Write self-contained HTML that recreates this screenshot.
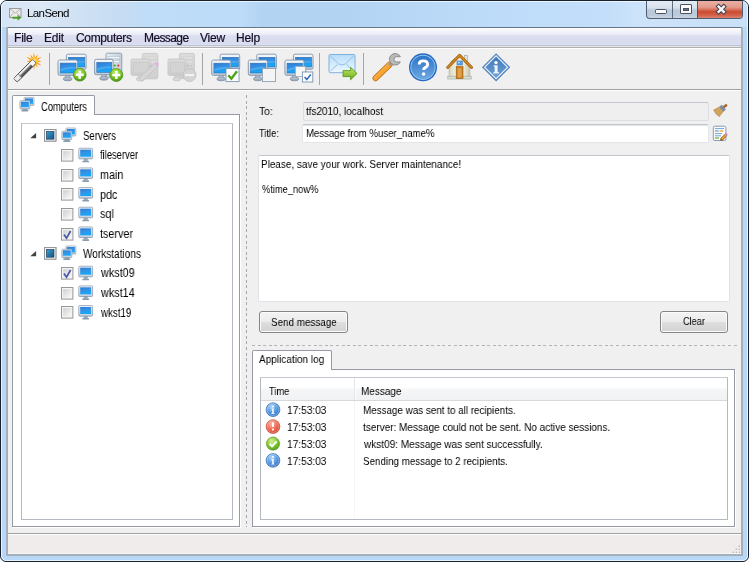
<!DOCTYPE html>
<html><head><meta charset="utf-8">
<style>
*{box-sizing:border-box;margin:0;padding:0}
html,body{width:749px;height:562px;overflow:hidden;background:#fff}
body{position:relative;font-family:"Liberation Sans",sans-serif;font-size:11px;color:#000}
.a{position:absolute}
.t{position:absolute;white-space:nowrap;transform-origin:0 0;line-height:1;will-change:transform}
.sep{position:absolute;width:1px;top:52.5px;height:32px;background:#a6a6a6}
.tab{position:absolute;background:#fff;border:1px solid #959aa4;border-bottom:none;border-radius:2px 2px 0 0}
.page{position:absolute;background:#fff;border:1px solid #959aa4;box-shadow:1px 1px 0 #fff}
.btn{position:absolute;border:1px solid #858585;border-radius:3px;background:linear-gradient(#f3f3f3 0,#ececec 48%,#dedede 52%,#d2d2d2 100%);box-shadow:inset 0 0 0 1px #fbfbfb}
.dash{position:absolute;background:repeating-linear-gradient(90deg,#b4b4b4 0 3px,transparent 3px 5.6px)}
.dashv{position:absolute;background:repeating-linear-gradient(180deg,#a8a8a8 0 3px,transparent 3px 5.6px)}
</style></head><body>
<!-- window frame -->
<div class="a" style="left:0;top:0;width:749px;height:562px;border:1px solid #18212c;border-radius:7px 7px 6px 6px;background:#b9d8f8;overflow:hidden">
 <div class="a" style="left:0;top:0;width:747px;height:26px;background:linear-gradient(90deg,#d6e5f5 0px,#dbe8f6 40px,#cfe1f4 80px,#c6dcf2 120px,#bfdcf8 150px,#bcdcf9 240px,#b3d3f3 262px,#b3d3f3 340px,#bcdbf9 470px,#c3defa 600px,#cce3fa 640px,#c8e0f8 747px)"></div>
 <div class="a" style="left:0;top:0;width:747px;height:560px;border:1px solid rgba(240,250,255,0.85);border-radius:6px 6px 5px 5px"></div>
</div>
<!-- inner border + client -->
<div class="a" style="left:6px;top:27px;width:737px;height:529px;border:2px solid #a3afbb;border-top:1px solid #687584;border-radius:2px 2px 0 0;background:#f0f0f0"></div>
<!-- title -->
<div class="a" style="left:27px;top:7px;font-size:11.5px;color:#000;letter-spacing:-0.6px;will-change:transform">LanSend</div>
<!-- caption buttons -->
<div class="a" style="left:646px;top:1px;width:97px;height:18px;border:1px solid #505e70;border-top:none;border-radius:0 0 4px 4px;overflow:hidden;background:linear-gradient(#e4ecf5 0,#d6e1ed 40%,#b9c9da 55%,#bccbdb 85%,#cad6e3 100%)">
 <div class="a" style="left:25px;top:0;width:1px;height:18px;background:#5e6c7c"></div>
 <div class="a" style="left:51px;top:0;width:45px;height:18px;background:linear-gradient(#eab0a4 0,#e29a8a 35%,#cc4a30 60%,#d4634c 80%,#e0907e 100%)"></div>
 <div class="a" style="left:50px;top:0;width:1px;height:18px;background:#6a4c48"></div>
 <div class="a" style="left:7.5px;top:7.5px;width:12px;height:5px;background:#fafafa;border:1px solid #4a5262;border-radius:1.5px"></div>
 <div class="a" style="left:33px;top:3px;width:12px;height:10px;background:#fafafa;border:1px solid #4a5262;border-radius:1px"><div class="a" style="left:2px;top:3px;width:6px;height:3px;background:#6a7584;border:1px solid #4a5262"></div></div>
 <svg class="a" style="left:66px;top:2px" width="16" height="13" viewBox="0 0 16 13"><path d="M5.6 3.6 L10.8 8.8 M10.8 3.6 L5.6 8.8" stroke="#3e4450" stroke-width="4.4" fill="none" stroke-linecap="square"/><path d="M5.6 3.6 L10.8 8.8 M10.8 3.6 L5.6 8.8" stroke="#f6f6f6" stroke-width="2.4" fill="none" stroke-linecap="square"/></svg>
</div>
<!-- menu -->
<div class="a" style="left:8px;top:28px;width:733px;height:21px;background:linear-gradient(#fdfdfe 0,#f4f5fa 3px,#eceef7 6px,#dadeef 8px,#d8dcee 16px,#dde1f1 17px,#bcc4d8 17px,#bcc4d8 18px,#e6e6e6 18px,#e6e6e6 19px,#b0b0b0 19px,#b0b0b0 20px,#fff 20px)"></div>
<div class="a" style="left:8px;top:49px;width:733px;height:40px;background:#f0f0f0"></div>
<div class="a" style="left:8px;top:89px;width:733px;height:1px;background:#a0a0a0"></div>
<div class="a" style="left:8px;top:90px;width:733px;height:1px;background:#fff"></div>
<div class="t" style="left:14px;top:31.5px;font-size:12px;color:#140c28;-webkit-text-stroke:0.2px #140c28;letter-spacing:-0.2px">File</div><div class="t" style="left:44px;top:31.5px;font-size:12px;color:#140c28;-webkit-text-stroke:0.2px #140c28;letter-spacing:-0.2px">Edit</div><div class="t" style="left:76px;top:31.5px;font-size:12px;color:#140c28;-webkit-text-stroke:0.2px #140c28;letter-spacing:-0.35px">Computers</div><div class="t" style="left:144px;top:31.5px;font-size:12px;color:#140c28;-webkit-text-stroke:0.2px #140c28;letter-spacing:-0.6px">Message</div><div class="t" style="left:200px;top:31.5px;font-size:12px;color:#140c28;-webkit-text-stroke:0.2px #140c28;letter-spacing:-0.2px">View</div><div class="t" style="left:236px;top:31.5px;font-size:12px;color:#140c28;-webkit-text-stroke:0.2px #140c28;letter-spacing:-0.2px">Help</div>
<div class="sep" style="left:49px"></div>
<div class="sep" style="left:202px"></div>
<div class="sep" style="left:319px"></div>
<div class="sep" style="left:363px"></div>

<!-- left panel -->
<div class="page" style="left:12px;top:114px;width:228px;height:413px"></div>
<div class="tab" style="left:12px;top:95px;width:83px;height:20px"></div>
<div class="a" style="left:21px;top:123px;width:212px;height:397px;background:#fff;border:1px solid #b4b8c0;border-top-color:#c6c9cf"></div>

<!-- splitters -->
<div class="dashv" style="left:246px;top:95px;width:1px;height:432px"></div>
<div class="dash" style="left:252px;top:345px;width:486px;height:1px"></div>

<!-- right panel fields -->
<div class="a" style="left:303px;top:102px;width:406px;height:19px;background:#efefef;border:1px solid #dcdee3;border-top-color:#c4c7cd;border-radius:2px"></div>
<div class="a" style="left:302px;top:124px;width:407px;height:19px;background:#fff;border:1px solid #e2e5ea;border-top:1px solid #c2c5cb;box-shadow:inset 0 1px 0 #e4e6ea;border-radius:2px"></div>
<div class="a" style="left:258px;top:155px;width:472px;height:147px;background:#fff;border:1px solid #e0e3e8;border-top-color:#c2c5cc;border-radius:2px"></div>
<div class="btn" style="left:259px;top:311px;width:89px;height:22px"></div>
<div class="btn" style="left:660px;top:311px;width:68px;height:22px"></div>

<div class="page" style="left:252px;top:369px;width:483px;height:158px"></div>
<div class="tab" style="left:252px;top:350px;width:80px;height:20px"></div>
<div class="a" style="left:260px;top:377px;width:468px;height:143px;background:#fff;border:1px solid #b4b8c0;border-top-color:#c6c9cf"></div>
<div class="a" style="left:261px;top:378px;width:466px;height:23px;background:linear-gradient(#fff 0,#fff 45%,#f5f6f8 50%,#f1f2f4 100%);border-bottom:1px solid #d7d9dc"></div>
<div class="a" style="left:354px;top:378px;width:1px;height:22px;background:#e2e4e7"></div>
<div class="a" style="left:355px;top:378px;width:1px;height:22px;background:#fff"></div>
<div class="a" style="left:354px;top:401px;width:1px;height:117px;background:repeating-linear-gradient(180deg,#ececec 0 1px,transparent 1px 2px)"></div>

<!-- status bar -->
<div class="a" style="left:8px;top:533px;width:733px;height:21px;background:#efeceb;border-top:1px solid #a0a0a0;box-shadow:inset 0 1px 0 #fff, inset 0 -1px 0 #f6f6f6"></div>
<div class="t" style="left:83.00px;top:129.59px;font-size:12px;transform:scaleX(0.7982);color:#000;">Servers</div><div class="t" style="left:100.00px;top:149.26px;font-size:12px;transform:scaleX(0.7826);color:#000;">fileserver</div><div class="t" style="left:100.00px;top:168.93px;font-size:12px;transform:scaleX(0.9000);color:#000;">main</div><div class="t" style="left:100.00px;top:188.60px;font-size:12px;transform:scaleX(0.9000);color:#000;">pdc</div><div class="t" style="left:100.00px;top:208.27px;font-size:12px;transform:scaleX(0.9000);color:#000;">sql</div><div class="t" style="left:100.00px;top:227.94px;font-size:12px;transform:scaleX(0.9000);color:#000;">tserver</div><div class="t" style="left:83.00px;top:247.61px;font-size:12px;transform:scaleX(0.8375);color:#000;">Workstations</div><div class="t" style="left:100.90px;top:267.28px;font-size:12px;transform:scaleX(0.9000);color:#000;">wkst09</div><div class="t" style="left:100.90px;top:286.95px;font-size:12px;transform:scaleX(0.9000);color:#000;">wkst14</div><div class="t" style="left:100.81px;top:306.62px;font-size:12px;transform:scaleX(0.8093);color:#000;">wkst19</div><div class="t" style="left:41.00px;top:100.59px;font-size:12px;transform:scaleX(0.7821);color:#000;">Computers</div><div class="t" style="left:259.00px;top:105.65px;font-size:11.5px;transform:scaleX(0.8913);color:#000;">To:</div><div class="t" style="left:259.30px;top:127.65px;font-size:11.5px;transform:scaleX(0.8107);color:#000;">Title:</div><div class="t" style="left:306.00px;top:105.65px;font-size:11.5px;transform:scaleX(0.8615);color:#000;">tfs2010, localhost</div><div class="t" style="left:305.60px;top:127.65px;font-size:11.5px;transform:scaleX(0.8341);color:#000;">Message from %user_name%</div><div class="t" style="left:261.00px;top:159.05px;font-size:11.5px;transform:scaleX(0.8651);color:#000;">Please, save your work. Server maintenance!</div><div class="t" style="left:261.90px;top:183.85px;font-size:11.5px;transform:scaleX(0.8079);color:#000;">%time_now%</div><div class="t" style="left:270.80px;top:316.65px;font-size:11.5px;transform:scaleX(0.8569);color:#000;">Send message</div><div class="t" style="left:683.00px;top:316.15px;font-size:11.5px;transform:scaleX(0.7956);color:#000;">Clear</div><div class="t" style="left:259.30px;top:354.45px;font-size:11.5px;transform:scaleX(0.8723);color:#000;">Application log</div><div class="t" style="left:269.00px;top:385.65px;font-size:11.5px;transform:scaleX(0.8087);color:#000;">Time</div><div class="t" style="left:360.80px;top:385.65px;font-size:11.5px;transform:scaleX(0.8667);color:#000;">Message</div><div class="t" style="left:287.00px;top:404.85px;font-size:11.5px;transform:scaleX(0.8812);color:#000;">17:53:03</div><div class="t" style="left:363.00px;top:404.85px;font-size:11.5px;transform:scaleX(0.8555);color:#000;">Message was sent to all recipients.</div><div class="t" style="left:287.00px;top:421.80px;font-size:11.5px;transform:scaleX(0.8812);color:#000;">17:53:03</div><div class="t" style="left:363.00px;top:421.80px;font-size:11.5px;transform:scaleX(0.8690);color:#000;">tserver: Message could not be sent. No active sessions.</div><div class="t" style="left:287.00px;top:438.75px;font-size:11.5px;transform:scaleX(0.8812);color:#000;">17:53:03</div><div class="t" style="left:363.87px;top:438.75px;font-size:11.5px;transform:scaleX(0.8724);color:#000;">wkst09: Message was sent successfully.</div><div class="t" style="left:287.00px;top:455.70px;font-size:11.5px;transform:scaleX(0.8812);color:#000;">17:53:03</div><div class="t" style="left:363.00px;top:455.70px;font-size:11.5px;transform:scaleX(0.8525);color:#000;">Sending message to 2 recipients.</div>
<svg class="a" style="left:0;top:0" width="749" height="562" viewBox="0 0 749 562"><defs>
<linearGradient id="gFrame" x1="0" y1="0" x2="0" y2="1"><stop offset="0" stop-color="#f6f8fb"/><stop offset="0.6" stop-color="#dfe6ee"/><stop offset="1" stop-color="#c2ccd8"/></linearGradient>
<linearGradient id="gScreen" x1="0" y1="0" x2="0.3" y2="1"><stop offset="0" stop-color="#2a7bd4"/><stop offset="0.5" stop-color="#3592e4"/><stop offset="1" stop-color="#16a6f8"/></linearGradient>
<linearGradient id="gStand" x1="0" y1="0" x2="0" y2="1"><stop offset="0" stop-color="#c9d3dd"/><stop offset="1" stop-color="#8e9cab"/></linearGradient>
<radialGradient id="gPlus" cx="0.45" cy="0.3" r="0.75"><stop offset="0" stop-color="#c4ee6a"/><stop offset="0.55" stop-color="#7cc42a"/><stop offset="1" stop-color="#3f8a0c"/></radialGradient>
<linearGradient id="gDis" x1="0" y1="0" x2="0" y2="1"><stop offset="0" stop-color="#dcdcdc"/><stop offset="1" stop-color="#cfcfcf"/></linearGradient>
<linearGradient id="gTower" x1="0" y1="0" x2="1" y2="0"><stop offset="0" stop-color="#e9eef3"/><stop offset="1" stop-color="#c3ced9"/></linearGradient>
<linearGradient id="gWand" x1="0" y1="0" x2="0" y2="1"><stop offset="0" stop-color="#d8d8d8"/><stop offset="0.3" stop-color="#f2f2f2"/><stop offset="0.6" stop-color="#6a6a6a"/><stop offset="1" stop-color="#3a3a3a"/></linearGradient>
<radialGradient id="gStar" cx="0.5" cy="0.5" r="0.5"><stop offset="0" stop-color="#fffbe0"/><stop offset="0.3" stop-color="#ffd040"/><stop offset="0.65" stop-color="#ff9c1a"/><stop offset="1" stop-color="#ff8400"/></radialGradient>
<linearGradient id="gMail" x1="0" y1="0" x2="0" y2="1"><stop offset="0" stop-color="#b7dcf8"/><stop offset="1" stop-color="#eef8fe"/></linearGradient>
<linearGradient id="gArrow" x1="0" y1="0" x2="0" y2="1"><stop offset="0" stop-color="#c8ec6a"/><stop offset="1" stop-color="#66a812"/></linearGradient>
<linearGradient id="gOrange" x1="0" y1="0" x2="1" y2="1"><stop offset="0" stop-color="#ffc35a"/><stop offset="1" stop-color="#f08a10"/></linearGradient>
<linearGradient id="gHelp" x1="0" y1="0" x2="0" y2="1"><stop offset="0" stop-color="#2f74c8"/><stop offset="1" stop-color="#6aa6e0"/></linearGradient>
<linearGradient id="gInfoD" x1="0" y1="0" x2="0" y2="1"><stop offset="0" stop-color="#4178b8"/><stop offset="1" stop-color="#6ea2d6"/></linearGradient>
<radialGradient id="gLogInfo" cx="0.4" cy="0.3" r="0.75"><stop offset="0" stop-color="#b0d8fa"/><stop offset="0.6" stop-color="#4b92de"/><stop offset="1" stop-color="#2f6fc2"/></radialGradient>
<radialGradient id="gLogErr" cx="0.4" cy="0.3" r="0.75"><stop offset="0" stop-color="#ffb8a8"/><stop offset="0.6" stop-color="#ec6450"/><stop offset="1" stop-color="#d2482f"/></radialGradient>
<radialGradient id="gLogOk" cx="0.4" cy="0.3" r="0.75"><stop offset="0" stop-color="#d4f290"/><stop offset="0.6" stop-color="#80c432"/><stop offset="1" stop-color="#4f9c1a"/></radialGradient>
<linearGradient id="gCb" x1="0" y1="0" x2="1" y2="1"><stop offset="0" stop-color="#cfcfcf"/><stop offset="1" stop-color="#fbfbfb"/></linearGradient>
<linearGradient id="gTri" x1="0" y1="0" x2="1" y2="1"><stop offset="0" stop-color="#3fa2d4"/><stop offset="1" stop-color="#134f82"/></linearGradient>
</defs><polygon points="34.00,52.60 34.98,57.53 37.80,54.62 36.69,58.51 41.45,56.90 37.67,60.22 41.60,61.20 37.67,62.18 41.45,65.50 36.69,63.89 37.80,67.78 34.98,64.87 34.00,69.80 33.02,64.87 30.20,67.78 31.31,63.89 26.55,65.50 30.33,62.18 26.40,61.20 30.33,60.22 26.55,56.90 31.31,58.51 30.20,54.62 33.02,57.53" fill="url(#gStar)"/><g transform="translate(25.3 70.4) rotate(-45)"><rect x="-14" y="-2.6" width="27" height="5.2" rx="1.5" fill="url(#gWand)" stroke="#3c3c3c" stroke-width="0.8"/><rect x="-13.6" y="-2.2" width="5.5" height="4.4" fill="#ececec"/><rect x="-8.1" y="-2.2" width="1" height="4.4" fill="#9a9a9a"/><rect x="8.2" y="-2.2" width="4.4" height="4.4" fill="#f6f6f6"/></g><rect x="74.15" y="68.70" width="4.2" height="3" fill="#c3ccd6" stroke="#8092a8" stroke-width="0.7"/><ellipse cx="76.25" cy="72.80" rx="4.53" ry="1.9" fill="url(#gStand)" stroke="#8092a8" stroke-width="0.8"/><rect x="66.40" y="54.20" width="19.70" height="15.00" rx="1.6" fill="url(#gFrame)" stroke="#8092a8" stroke-width="0.9"/><rect x="68.60" y="57.30" width="16.10" height="9.60" fill="url(#gScreen)" stroke="#2f6fae" stroke-width="0.6"/><path d="M68.60 63.50 Q76.25 60.50 84.70 61.25 V62.45 Q76.25 62.00 68.60 65.00Z" fill="#8fd0ff" opacity="0.35"/><rect x="65.60" y="74.80" width="4.2" height="3" fill="#c3ccd6" stroke="#8092a8" stroke-width="0.7"/><ellipse cx="67.70" cy="78.90" rx="4.46" ry="1.9" fill="url(#gStand)" stroke="#8092a8" stroke-width="0.8"/><rect x="58.00" y="60.00" width="19.40" height="15.30" rx="1.6" fill="url(#gFrame)" stroke="#8092a8" stroke-width="0.9"/><rect x="60.20" y="63.10" width="15.80" height="9.90" fill="url(#gScreen)" stroke="#2f6fae" stroke-width="0.6"/><path d="M60.20 69.49 Q67.70 66.43 76.00 67.19 V68.42 Q67.70 67.96 60.20 71.02Z" fill="#8fd0ff" opacity="0.35"/><circle cx="79.7" cy="74.7" r="6.4" fill="url(#gPlus)" stroke="#4b8d16" stroke-width="0.7"/><path d="M75.73 74.70 H83.67 M79.70 70.73 V78.67" stroke="#fff" stroke-width="2.48"/><rect x="106.00" y="53.20" width="15.80" height="24.00" rx="1.5" fill="url(#gTower)" stroke="#8293a6" stroke-width="0.8"/><rect x="108.00" y="56.70" width="11.80" height="2" fill="#f6f9fc" stroke="#a9b6c4" stroke-width="0.5"/><rect x="108.00" y="60.70" width="11.80" height="2" fill="#f6f9fc" stroke="#a9b6c4" stroke-width="0.5"/><circle cx="114.85" cy="65.60" r="1.1" fill="#3cb43c"/><circle cx="118.32" cy="65.60" r="1.1" fill="#e43c3c"/><rect x="101.75" y="74.20" width="4.2" height="3" fill="#c3ccd6" stroke="#8092a8" stroke-width="0.7"/><ellipse cx="103.85" cy="78.30" rx="4.25" ry="1.9" fill="url(#gStand)" stroke="#8092a8" stroke-width="0.8"/><rect x="94.60" y="59.30" width="18.50" height="15.40" rx="1.6" fill="url(#gFrame)" stroke="#8092a8" stroke-width="0.9"/><rect x="96.80" y="62.40" width="14.90" height="10.00" fill="url(#gScreen)" stroke="#2f6fae" stroke-width="0.6"/><path d="M96.80 68.85 Q103.85 65.77 111.70 66.54 V67.77 Q103.85 67.31 96.80 70.39Z" fill="#8fd0ff" opacity="0.35"/><circle cx="116.3" cy="75.0" r="6.5" fill="url(#gPlus)" stroke="#4b8d16" stroke-width="0.7"/><path d="M112.27 75.00 H120.33 M116.30 70.97 V79.03" stroke="#fff" stroke-width="2.51"/><rect x="142.40" y="53.40" width="15.40" height="25.40" rx="1.5" fill="url(#gDis)" stroke="#c4c4c4" stroke-width="0.8"/><rect x="144.40" y="56.90" width="11.40" height="2" fill="#e4e4e4" stroke="#cacaca" stroke-width="0.5"/><rect x="144.40" y="60.90" width="11.40" height="2" fill="#e4e4e4" stroke="#cacaca" stroke-width="0.5"/><circle cx="151.02" cy="65.80" r="1.1" fill="#bdbdbd"/><circle cx="154.41" cy="65.80" r="1.1" fill="#c8c8c8"/><rect x="138.40" y="74.90" width="4.2" height="3" fill="#d6d6d6" stroke="#c6c6c6" stroke-width="0.7"/><ellipse cx="140.50" cy="79.00" rx="4.37" ry="1.9" fill="#d8d8d8" stroke="#c6c6c6" stroke-width="0.8"/><rect x="131.00" y="59.00" width="19.00" height="16.40" rx="1.6" fill="url(#gDis)" stroke="#c6c6c6" stroke-width="0.9"/><rect x="133.20" y="62.10" width="15.40" height="11.00" fill="#d3d3d3" stroke="#c4c4c4" stroke-width="0.6"/><g transform="translate(148.4 72.3) rotate(-42)"><rect x="-11" y="-2.2" width="22" height="4.4" fill="#d6d6d6" stroke="#c2c2c2" stroke-width="0.8"/><path d="M11 -2.2 L14 0 L11 2.2Z" fill="#e6a8e6"/></g><rect x="179.40" y="53.40" width="14.90" height="25.00" rx="1.5" fill="url(#gDis)" stroke="#c4c4c4" stroke-width="0.8"/><rect x="181.40" y="56.90" width="10.90" height="2" fill="#e4e4e4" stroke="#cacaca" stroke-width="0.5"/><rect x="181.40" y="60.90" width="10.90" height="2" fill="#e4e4e4" stroke="#cacaca" stroke-width="0.5"/><circle cx="187.74" cy="65.80" r="1.1" fill="#bdbdbd"/><circle cx="191.02" cy="65.80" r="1.1" fill="#c8c8c8"/><rect x="174.90" y="74.90" width="4.2" height="3" fill="#d6d6d6" stroke="#c6c6c6" stroke-width="0.7"/><ellipse cx="177.00" cy="79.00" rx="4.14" ry="1.9" fill="#d8d8d8" stroke="#c6c6c6" stroke-width="0.8"/><rect x="168.00" y="59.00" width="18.00" height="16.40" rx="1.6" fill="url(#gDis)" stroke="#c6c6c6" stroke-width="0.9"/><rect x="170.20" y="62.10" width="14.40" height="11.00" fill="#d3d3d3" stroke="#c4c4c4" stroke-width="0.6"/><circle cx="189.5" cy="75" r="6.5" fill="#d4d4d4" stroke="#c0c0c0" stroke-width="0.8"/><rect x="185" y="74" width="9" height="2.2" fill="#f2f2f2"/><rect x="227.80" y="68.70" width="4.2" height="3" fill="#c3ccd6" stroke="#8092a8" stroke-width="0.7"/><ellipse cx="229.90" cy="72.80" rx="4.51" ry="1.9" fill="url(#gStand)" stroke="#8092a8" stroke-width="0.8"/><rect x="220.10" y="54.20" width="19.60" height="15.00" rx="1.6" fill="url(#gFrame)" stroke="#8092a8" stroke-width="0.9"/><rect x="222.30" y="57.30" width="16.00" height="9.60" fill="url(#gScreen)" stroke="#2f6fae" stroke-width="0.6"/><path d="M222.30 63.50 Q229.90 60.50 238.30 61.25 V62.45 Q229.90 62.00 222.30 65.00Z" fill="#8fd0ff" opacity="0.35"/><rect x="219.10" y="74.80" width="4.2" height="3" fill="#c3ccd6" stroke="#8092a8" stroke-width="0.7"/><ellipse cx="221.20" cy="78.90" rx="4.37" ry="1.9" fill="url(#gStand)" stroke="#8092a8" stroke-width="0.8"/><rect x="211.70" y="60.10" width="19.00" height="15.20" rx="1.6" fill="url(#gFrame)" stroke="#8092a8" stroke-width="0.9"/><rect x="213.90" y="63.20" width="15.40" height="9.80" fill="url(#gScreen)" stroke="#2f6fae" stroke-width="0.6"/><path d="M213.90 69.52 Q221.20 66.48 229.30 67.24 V68.46 Q221.20 68.00 213.90 71.04Z" fill="#8fd0ff" opacity="0.35"/><rect x="226" y="68.4" width="13" height="13.2" fill="#fff" stroke="#7893b2" stroke-width="0.9"/><path d="M228.3 75.2 L231.4 78.6 L237 71.2" stroke="#4ea21a" stroke-width="2.4" fill="none"/><rect x="264.50" y="68.70" width="4.2" height="3" fill="#c3ccd6" stroke="#8092a8" stroke-width="0.7"/><ellipse cx="266.60" cy="72.80" rx="4.51" ry="1.9" fill="url(#gStand)" stroke="#8092a8" stroke-width="0.8"/><rect x="256.80" y="54.20" width="19.60" height="15.00" rx="1.6" fill="url(#gFrame)" stroke="#8092a8" stroke-width="0.9"/><rect x="259.00" y="57.30" width="16.00" height="9.60" fill="url(#gScreen)" stroke="#2f6fae" stroke-width="0.6"/><path d="M259.00 63.50 Q266.60 60.50 275.00 61.25 V62.45 Q266.60 62.00 259.00 65.00Z" fill="#8fd0ff" opacity="0.35"/><rect x="255.70" y="74.80" width="4.2" height="3" fill="#c3ccd6" stroke="#8092a8" stroke-width="0.7"/><ellipse cx="257.80" cy="78.90" rx="4.37" ry="1.9" fill="url(#gStand)" stroke="#8092a8" stroke-width="0.8"/><rect x="248.30" y="60.10" width="19.00" height="15.20" rx="1.6" fill="url(#gFrame)" stroke="#8092a8" stroke-width="0.9"/><rect x="250.50" y="63.20" width="15.40" height="9.80" fill="url(#gScreen)" stroke="#2f6fae" stroke-width="0.6"/><path d="M250.50 69.52 Q257.80 66.48 265.90 67.24 V68.46 Q257.80 68.00 250.50 71.04Z" fill="#8fd0ff" opacity="0.35"/><rect x="262.4" y="68.5" width="13.1" height="13.1" fill="#f4f4f4" stroke="#8ea0b4" stroke-width="0.9"/><rect x="301.10" y="68.70" width="4.2" height="3" fill="#c3ccd6" stroke="#8092a8" stroke-width="0.7"/><ellipse cx="303.20" cy="72.80" rx="4.51" ry="1.9" fill="url(#gStand)" stroke="#8092a8" stroke-width="0.8"/><rect x="293.40" y="54.20" width="19.60" height="15.00" rx="1.6" fill="url(#gFrame)" stroke="#8092a8" stroke-width="0.9"/><rect x="295.60" y="57.30" width="16.00" height="9.60" fill="url(#gScreen)" stroke="#2f6fae" stroke-width="0.6"/><path d="M295.60 63.50 Q303.20 60.50 311.60 61.25 V62.45 Q303.20 62.00 295.60 65.00Z" fill="#8fd0ff" opacity="0.35"/><rect x="292.30" y="74.80" width="4.2" height="3" fill="#c3ccd6" stroke="#8092a8" stroke-width="0.7"/><ellipse cx="294.40" cy="78.90" rx="4.37" ry="1.9" fill="url(#gStand)" stroke="#8092a8" stroke-width="0.8"/><rect x="284.90" y="60.10" width="19.00" height="15.20" rx="1.6" fill="url(#gFrame)" stroke="#8092a8" stroke-width="0.9"/><rect x="287.10" y="63.20" width="15.40" height="9.80" fill="url(#gScreen)" stroke="#2f6fae" stroke-width="0.6"/><path d="M287.10 69.52 Q294.40 66.48 302.50 67.24 V68.46 Q294.40 68.00 287.10 71.04Z" fill="#8fd0ff" opacity="0.35"/><rect x="295.5" y="66.5" width="10" height="10" fill="#f6f6f6" stroke="#9aabbd" stroke-width="0.8"/><rect x="302.4" y="72" width="10.4" height="10" fill="#fff" stroke="#7893b2" stroke-width="0.9"/><path d="M304.6 77 L306.8 79.5 L310.8 74.6" stroke="#2f6fbf" stroke-width="1.6" fill="none"/><rect x="329" y="54.5" width="26" height="18.2" rx="1.2" fill="url(#gMail)" stroke="#7fb0dc" stroke-width="1"/><path d="M330.5 56 L338.5 63.8 Q342 66.3 345.5 63.8 L353.5 56 M330.5 71 L337.5 64.5 M353.5 71 L346.5 64.5" stroke="#8fc0e6" stroke-width="1" fill="none"/><path d="M343 70.6 H350.6 V67.3 L357 73.5 L350.6 79.8 V76.6 H343Z" fill="url(#gArrow)" stroke="#4e9010" stroke-width="0.8"/><path d="M375.6 78.2 L389.6 64.6" stroke="#b96a10" stroke-width="6" stroke-linecap="round"/><path d="M375.6 78.2 L389.6 64.6" stroke="url(#gOrange)" stroke-width="4.6" stroke-linecap="round"/><path d="M389 65.4 L392 62.4" stroke="#9a9a9a" stroke-width="2.6"/><path d="M400.4 56.7 A5.8 5.8 0 1 0 400.4 61.9 L396.6 61.9 A2.4 2.4 0 0 1 396.6 56.7 Z" fill="#b9b9b9" stroke="#7d7d7d" stroke-width="0.8"/><circle cx="423" cy="67.3" r="14" fill="#2a68c0"/><circle cx="423" cy="67.3" r="12.6" fill="#8cc6f2"/><circle cx="423" cy="67.3" r="11.6" fill="url(#gHelp)"/><path d="M419.2 64.4 Q419.2 60.9 423.2 60.9 Q427.6 60.9 427.6 64.4 Q427.6 66.4 425.2 67.6 Q423.6 68.4 423.6 70" stroke="#fff" stroke-width="2.9" fill="none"/><circle cx="423.6" cy="74" r="1.7" fill="#fff"/><defs><linearGradient id="gWall" x1="0" y1="0" x2="1" y2="0"><stop offset="0" stop-color="#d8d6c0"/><stop offset="0.3" stop-color="#f0eed8"/><stop offset="0.7" stop-color="#eeecd6"/><stop offset="1" stop-color="#c8c6b0"/></linearGradient></defs><rect x="464.6" y="55.6" width="3" height="7" fill="#e6e4d4" stroke="#a0a098" stroke-width="0.6"/><path d="M449.2 67.5 L459.6 57 L469.8 67.5 V77.6 H449.2Z" fill="url(#gWall)" stroke="#a7a591" stroke-width="0.6"/><rect x="447.8" y="76.2" width="23.4" height="2.8" fill="#dcdfd2" stroke="#9ea39e" stroke-width="0.6"/><path d="M450.4 62.4 L454.6 58.6 H457.6 L453.2 62.4Z" fill="#c27818" stroke="#a06010" stroke-width="0.4"/><path d="M447.6 67.4 L459.6 55.2 L471.6 67.4" stroke="#9c5a0a" stroke-width="2.8" fill="none" stroke-linejoin="round" stroke-linecap="round"/><path d="M447.6 67.4 L459.6 55.2 L471.6 67.4" stroke="#d88a22" stroke-width="1.4" fill="none" stroke-linejoin="round" stroke-linecap="round"/><rect x="457" y="61" width="5.4" height="4" fill="#5a9ee8" stroke="#3f78c0" stroke-width="0.6"/><rect x="457.8" y="61.8" width="2" height="1.4" fill="#b8dcff"/><rect x="456.2" y="66.6" width="6.8" height="12" fill="#c87e22" stroke="#9a5a0c" stroke-width="0.6"/><rect x="457.6" y="68.2" width="4" height="9.2" fill="#e2a048"/><path d="M496.1 53.2 L510.2 67.3 L496.1 81.4 L482 67.3Z" fill="#5585bd"/><path d="M496.1 55.1 L508.3 67.3 L496.1 79.5 L483.9 67.3Z" fill="#f4f8fc"/><path d="M496.1 56.6 L506.8 67.3 L496.1 78 L485.4 67.3Z" fill="url(#gInfoD)"/><circle cx="496" cy="62.6" r="1.7" fill="#fff"/><path d="M493.6 65.2 H497.6 V72.2 H499 V73.4 H493.2 V72.2 H494.6 V66.4 H493.6Z" fill="#f0f4fa"/><rect x="9.5" y="8.5" width="11.5" height="9" fill="#ececec" stroke="#9b9b9b" stroke-width="1"/><path d="M9.8 8.8 L15.25 13 L20.7 8.8 M9.8 17.2 L13.8 12.6 M20.7 17.2 L16.7 12.6" stroke="#a4a4a4" stroke-width="0.8" fill="none"/><path d="M12.4 16.8 H17.6 V14.8 L21.2 17.8 L17.6 20.8 V18.8 H12.4Z" fill="#4f9d2a"/><path d="M30.3 138.20 L36.1 138.20 L36.1 133.00Z" fill="#404040"/><rect x="44.50" y="129.50" width="11.4" height="11.6" fill="#f6f6f6" stroke="#979797" stroke-width="1"/><rect x="46.00" y="131.00" width="8.4" height="8.6" fill="url(#gCb)" stroke="#f0f0f0" stroke-width="0.3"/><rect x="44.50" y="129.50" width="11.4" height="11.6" fill="#f6f6f6" stroke="#979797" stroke-width="1"/><rect x="46.00" y="131.00" width="8.4" height="8.6" fill="url(#gCb)" stroke="#f0f0f0" stroke-width="0.3"/><rect x="46.40" y="131.40" width="7.6" height="7.8" fill="url(#gTri)" stroke="#1c3c5c" stroke-width="0.6"/><rect x="65.90" y="128.00" width="10" height="8" rx="0.8" fill="url(#gFrame)" stroke="#7d8fa3" stroke-width="0.6"/><rect x="66.90" y="129.00" width="8" height="5.4" fill="url(#gScreen)"/><rect x="64.80" y="138.00" width="4" height="3" fill="#9aa9b8"/><rect x="63.30" y="140.20" width="7" height="1.8" rx="0.6" fill="#8c9cad"/><rect x="61.80" y="131.30" width="10" height="8.2" rx="0.8" fill="url(#gFrame)" stroke="#7d8fa3" stroke-width="0.6"/><rect x="62.80" y="132.30" width="8" height="5.4" fill="url(#gScreen)"/><rect x="61.50" y="149.50" width="11.4" height="11.6" fill="#f6f6f6" stroke="#979797" stroke-width="1"/><rect x="63.00" y="151.00" width="8.4" height="8.6" fill="url(#gCb)" stroke="#f0f0f0" stroke-width="0.3"/><rect x="83.70" y="158.36" width="4" height="2.5" fill="#9aa9b8"/><rect x="82.30" y="160.66" width="6.8" height="1.6" rx="0.6" fill="#8c9cad"/><rect x="78.80" y="148.26" width="13.80" height="10.60" rx="1" fill="url(#gFrame)" stroke="#7d8fa3" stroke-width="0.7"/><rect x="80.20" y="149.66" width="11.00" height="7.00" fill="url(#gScreen)"/><rect x="61.50" y="169.50" width="11.4" height="11.6" fill="#f6f6f6" stroke="#979797" stroke-width="1"/><rect x="63.00" y="171.00" width="8.4" height="8.6" fill="url(#gCb)" stroke="#f0f0f0" stroke-width="0.3"/><rect x="83.70" y="178.03" width="4" height="2.5" fill="#9aa9b8"/><rect x="82.30" y="180.33" width="6.8" height="1.6" rx="0.6" fill="#8c9cad"/><rect x="78.80" y="167.93" width="13.80" height="10.60" rx="1" fill="url(#gFrame)" stroke="#7d8fa3" stroke-width="0.7"/><rect x="80.20" y="169.33" width="11.00" height="7.00" fill="url(#gScreen)"/><rect x="61.50" y="188.50" width="11.4" height="11.6" fill="#f6f6f6" stroke="#979797" stroke-width="1"/><rect x="63.00" y="190.00" width="8.4" height="8.6" fill="url(#gCb)" stroke="#f0f0f0" stroke-width="0.3"/><rect x="83.70" y="197.69" width="4" height="2.5" fill="#9aa9b8"/><rect x="82.30" y="200.00" width="6.8" height="1.6" rx="0.6" fill="#8c9cad"/><rect x="78.80" y="187.59" width="13.80" height="10.60" rx="1" fill="url(#gFrame)" stroke="#7d8fa3" stroke-width="0.7"/><rect x="80.20" y="189.00" width="11.00" height="7.00" fill="url(#gScreen)"/><rect x="61.50" y="208.50" width="11.4" height="11.6" fill="#f6f6f6" stroke="#979797" stroke-width="1"/><rect x="63.00" y="210.00" width="8.4" height="8.6" fill="url(#gCb)" stroke="#f0f0f0" stroke-width="0.3"/><rect x="83.70" y="217.36" width="4" height="2.5" fill="#9aa9b8"/><rect x="82.30" y="219.66" width="6.8" height="1.6" rx="0.6" fill="#8c9cad"/><rect x="78.80" y="207.26" width="13.80" height="10.60" rx="1" fill="url(#gFrame)" stroke="#7d8fa3" stroke-width="0.7"/><rect x="80.20" y="208.66" width="11.00" height="7.00" fill="url(#gScreen)"/><rect x="61.50" y="228.50" width="11.4" height="11.6" fill="#f6f6f6" stroke="#979797" stroke-width="1"/><rect x="63.00" y="230.00" width="8.4" height="8.6" fill="url(#gCb)" stroke="#f0f0f0" stroke-width="0.3"/><path d="M64.00 234.60 L66.50 238.20 L70.60 231.00" stroke="#4a58a8" stroke-width="1.7" fill="none"/><rect x="83.70" y="237.02" width="4" height="2.5" fill="#9aa9b8"/><rect x="82.30" y="239.32" width="6.8" height="1.6" rx="0.6" fill="#8c9cad"/><rect x="78.80" y="226.92" width="13.80" height="10.60" rx="1" fill="url(#gFrame)" stroke="#7d8fa3" stroke-width="0.7"/><rect x="80.20" y="228.32" width="11.00" height="7.00" fill="url(#gScreen)"/><path d="M30.3 256.19 L36.1 256.19 L36.1 250.99Z" fill="#404040"/><rect x="44.50" y="247.50" width="11.4" height="11.6" fill="#f6f6f6" stroke="#979797" stroke-width="1"/><rect x="46.00" y="249.00" width="8.4" height="8.6" fill="url(#gCb)" stroke="#f0f0f0" stroke-width="0.3"/><rect x="44.50" y="247.50" width="11.4" height="11.6" fill="#f6f6f6" stroke="#979797" stroke-width="1"/><rect x="46.00" y="249.00" width="8.4" height="8.6" fill="url(#gCb)" stroke="#f0f0f0" stroke-width="0.3"/><rect x="46.40" y="249.40" width="7.6" height="7.8" fill="url(#gTri)" stroke="#1c3c5c" stroke-width="0.6"/><rect x="65.90" y="245.99" width="10" height="8" rx="0.8" fill="url(#gFrame)" stroke="#7d8fa3" stroke-width="0.6"/><rect x="66.90" y="246.99" width="8" height="5.4" fill="url(#gScreen)"/><rect x="64.80" y="255.99" width="4" height="3" fill="#9aa9b8"/><rect x="63.30" y="258.19" width="7" height="1.8" rx="0.6" fill="#8c9cad"/><rect x="61.80" y="249.29" width="10" height="8.2" rx="0.8" fill="url(#gFrame)" stroke="#7d8fa3" stroke-width="0.6"/><rect x="62.80" y="250.29" width="8" height="5.4" fill="url(#gScreen)"/><rect x="61.50" y="267.50" width="11.4" height="11.6" fill="#f6f6f6" stroke="#979797" stroke-width="1"/><rect x="63.00" y="269.00" width="8.4" height="8.6" fill="url(#gCb)" stroke="#f0f0f0" stroke-width="0.3"/><path d="M64.00 273.60 L66.50 277.20 L70.60 270.00" stroke="#4a58a8" stroke-width="1.7" fill="none"/><rect x="83.70" y="276.36" width="4" height="2.5" fill="#9aa9b8"/><rect x="82.30" y="278.66" width="6.8" height="1.6" rx="0.6" fill="#8c9cad"/><rect x="78.80" y="266.25" width="13.80" height="10.60" rx="1" fill="url(#gFrame)" stroke="#7d8fa3" stroke-width="0.7"/><rect x="80.20" y="267.65" width="11.00" height="7.00" fill="url(#gScreen)"/><rect x="61.50" y="287.50" width="11.4" height="11.6" fill="#f6f6f6" stroke="#979797" stroke-width="1"/><rect x="63.00" y="289.00" width="8.4" height="8.6" fill="url(#gCb)" stroke="#f0f0f0" stroke-width="0.3"/><rect x="83.70" y="296.02" width="4" height="2.5" fill="#9aa9b8"/><rect x="82.30" y="298.32" width="6.8" height="1.6" rx="0.6" fill="#8c9cad"/><rect x="78.80" y="285.92" width="13.80" height="10.60" rx="1" fill="url(#gFrame)" stroke="#7d8fa3" stroke-width="0.7"/><rect x="80.20" y="287.32" width="11.00" height="7.00" fill="url(#gScreen)"/><rect x="61.50" y="306.50" width="11.4" height="11.6" fill="#f6f6f6" stroke="#979797" stroke-width="1"/><rect x="63.00" y="308.00" width="8.4" height="8.6" fill="url(#gCb)" stroke="#f0f0f0" stroke-width="0.3"/><rect x="83.70" y="315.68" width="4" height="2.5" fill="#9aa9b8"/><rect x="82.30" y="317.98" width="6.8" height="1.6" rx="0.6" fill="#8c9cad"/><rect x="78.80" y="305.58" width="13.80" height="10.60" rx="1" fill="url(#gFrame)" stroke="#7d8fa3" stroke-width="0.7"/><rect x="80.20" y="306.98" width="11.00" height="7.00" fill="url(#gScreen)"/><rect x="24.00" y="97.40" width="10" height="8" rx="0.8" fill="url(#gFrame)" stroke="#7d8fa3" stroke-width="0.6"/><rect x="25.00" y="98.40" width="8" height="5.4" fill="url(#gScreen)"/><rect x="22.90" y="107.40" width="4" height="3" fill="#9aa9b8"/><rect x="21.40" y="109.60" width="7" height="1.8" rx="0.6" fill="#8c9cad"/><rect x="19.90" y="100.70" width="10" height="8.2" rx="0.8" fill="url(#gFrame)" stroke="#7d8fa3" stroke-width="0.6"/><rect x="20.90" y="101.70" width="8" height="5.4" fill="url(#gScreen)"/><circle cx="273" cy="409.7" r="6.9" fill="url(#gLogInfo)" stroke="#2a62a8" stroke-width="0.6"/><circle cx="273" cy="409.7" r="5.9" fill="none" stroke="#ffffff" stroke-opacity="0.45" stroke-width="0.7"/><circle cx="273" cy="406.40" r="1.0" fill="#fff"/><path d="M271.6 408.40 H273.7 V413.00 H274.5 V413.90 H271.4 V413.00 H272.2 V409.20 H271.6Z" fill="#fff"/><circle cx="273" cy="426.6" r="6.9" fill="url(#gLogErr)" stroke="#b83a28" stroke-width="0.6"/><circle cx="273" cy="426.6" r="5.9" fill="none" stroke="#ffffff" stroke-opacity="0.35" stroke-width="0.7"/><rect x="272.0" y="422.20" width="2.0" height="4.8" rx="0.7" fill="#fff"/><circle cx="273" cy="429.60" r="1.1" fill="#fff"/><circle cx="273" cy="443.6" r="6.6" fill="url(#gLogOk)" stroke="#4b8d16" stroke-width="0.6"/><path d="M269.60 443.80 L272.00 446.20 L276.60 441.40" stroke="#fff" stroke-width="2.0" fill="none"/><circle cx="273" cy="460.4" r="6.9" fill="url(#gLogInfo)" stroke="#2a62a8" stroke-width="0.6"/><circle cx="273" cy="460.4" r="5.9" fill="none" stroke="#ffffff" stroke-opacity="0.45" stroke-width="0.7"/><circle cx="273" cy="457.10" r="1.0" fill="#fff"/><path d="M271.6 459.10 H273.7 V463.70 H274.5 V464.60 H271.4 V463.70 H272.2 V459.90 H271.6Z" fill="#fff"/><rect x="739.5" y="546.5" width="1.2" height="1.2" fill="#ffffff"/><rect x="738.7" y="545.7" width="1.2" height="1.2" fill="#a4a4a4"/><rect x="736.5" y="549.5" width="1.2" height="1.2" fill="#ffffff"/><rect x="735.7" y="548.7" width="1.2" height="1.2" fill="#a4a4a4"/><rect x="739.5" y="549.5" width="1.2" height="1.2" fill="#ffffff"/><rect x="738.7" y="548.7" width="1.2" height="1.2" fill="#a4a4a4"/><rect x="733.5" y="552.5" width="1.2" height="1.2" fill="#ffffff"/><rect x="732.7" y="551.7" width="1.2" height="1.2" fill="#a4a4a4"/><rect x="736.5" y="552.5" width="1.2" height="1.2" fill="#ffffff"/><rect x="735.7" y="551.7" width="1.2" height="1.2" fill="#a4a4a4"/><rect x="739.5" y="552.5" width="1.2" height="1.2" fill="#ffffff"/><rect x="738.7" y="551.7" width="1.2" height="1.2" fill="#a4a4a4"/><g transform="translate(721.6 109) rotate(140) scale(0.88)"><path d="M-7.6 -1.2 H-2.6 V1.2 H-7.6Z" fill="#b25e22" stroke="#8a4a1a" stroke-width="0.4"/><path d="M-3 -3.4 H0.6 V3.4 H-3Z" fill="#7f8fa2" stroke="#5f6f82" stroke-width="0.4"/><path d="M0.6 -3.4 L7.6 -5 Q9.4 0 7.6 5 L0.6 3.4Z" fill="#d4aa64" stroke="#a8783a" stroke-width="0.5"/><path d="M2 -2 L8 -3 M2 0 L8.6 0 M2 2 L8 3" stroke="#b08a4a" stroke-width="0.5"/></g><rect x="713.3" y="126.2" width="12.6" height="14.3" rx="1.5" fill="#f8fafc" stroke="#8a9bb2" stroke-width="1"/><path d="M715 128.6 H724 M715 133.6 H722 M715 135.8 H721" stroke="#6fa8dc" stroke-width="1"/><path d="M715 131 H718.6" stroke="#7f94aa" stroke-width="1.2"/><path d="M719.6 131 H723.4" stroke="#f0a020" stroke-width="1.2"/><path d="M715 138 H719" stroke="#79b84a" stroke-width="1.4"/><path d="M721.6 139.4 L725.8 135" stroke="#8a6a3a" stroke-width="3" stroke-linecap="round"/><path d="M721.8 139.2 L725.6 135.2" stroke="#f2a030" stroke-width="1.8"/><path d="M725.4 135.4 L727 133.6" stroke="#d890e0" stroke-width="2"/></svg>
</body></html>
